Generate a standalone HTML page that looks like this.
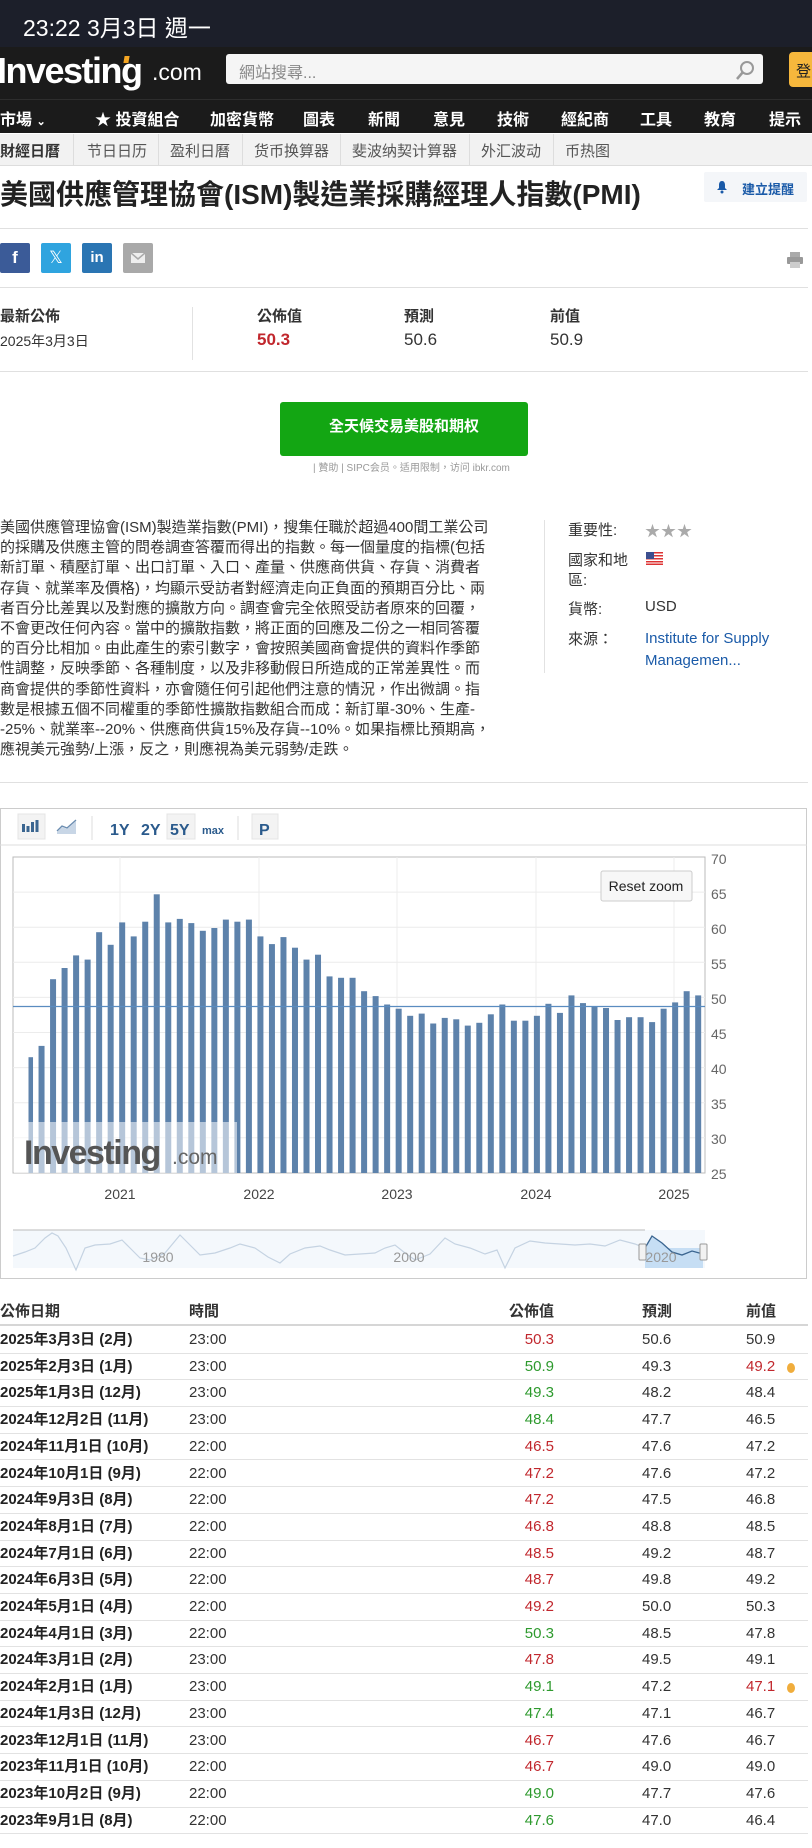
<!DOCTYPE html>
<html><head><meta charset="utf-8">
<style>
*{margin:0;padding:0;box-sizing:border-box}
body{width:812px;height:1848px;position:relative;background:#fff;font-family:"Liberation Sans","Noto Sans CJK TC",sans-serif;color:#333;overflow:hidden}
.a{position:absolute;white-space:nowrap}
#sb{left:0;top:0;width:812px;height:47px;background:#1c1f2a}
#hd{left:0;top:47px;width:812px;height:52px;background:#1b1b1b}
#nav{left:0;top:99px;width:812px;height:34px;background:#1b1b1b;border-top:1px solid #2d2d2d}
#nav span{position:absolute;top:6px;color:#fff;font-size:16px;font-weight:bold}
#sub{left:0;top:134px;width:812px;height:32px;background:#f2f2f2;border-bottom:1px solid #ddd}
#sub span{position:absolute;top:6px;font-size:15px;color:#555}
.vl{position:absolute;top:0;width:1px;height:32px;background:#ddd}
.hr{position:absolute;left:0;width:808px;height:1px;background:#e0e0e0}
.soc{position:absolute;top:243px;width:30px;height:30px;border-radius:2px;color:#fff;font-weight:bold;text-align:center;line-height:30px;font-size:17px}
.desc{left:0;top:518px;font-size:15px;line-height:20.2px;color:#333}
.rl{position:absolute;font-size:15px;color:#333}
.tbl{position:absolute;left:0;width:808px;font-size:15px}
.row{position:absolute;left:0;width:808px;height:26.7px;border-bottom:1px solid #e2e2e2}
.row span{position:absolute;top:4px;line-height:18px;height:18px}
.d{left:0;font-weight:bold;color:#222}
.t{left:189px;color:#333}
.v{right:254px;text-align:right}
.f{left:642px;color:#333}
.p{left:746px;color:#333}
.r{color:#c1272d}.g{color:#2e9a2e}
.dot{position:absolute;left:787px;top:9px;width:8px;height:10px;border-radius:50%;background:#f0ad3c}
</style></head><body>
<div id="sb" class="a"><span class="a" style="left:23px;top:9px;color:#fff;font-size:23px">23:22 3月3日 週一</span></div>
<div id="hd" class="a">
 <span class="a" style="left:-3px;top:3px;color:#fff;font-size:36px;font-weight:bold;letter-spacing:-1.5px">Investing</span>
 <span class="a" style="left:152px;top:12px;color:#fff;font-size:23px">.com</span>
 <div class="a" style="left:124px;top:9px;width:5px;height:7px;background:#f5a623;transform:skewX(-10deg)"></div>
 <div class="a" style="left:226px;top:7px;width:537px;height:30px;background:#f5f5f5;border-radius:3px"><span class="a" style="left:13px;top:5px;font-size:16px;color:#888">網站搜尋...</span>
 <svg class="a" style="left:508px;top:5px" width="22" height="22" viewBox="0 0 22 22"><circle cx="13" cy="9" r="6" fill="none" stroke="#999" stroke-width="2"/><line x1="9" y1="13" x2="3" y2="20" stroke="#999" stroke-width="2.5"/></svg></div>
 <div class="a" style="left:789px;top:5px;width:30px;height:35px;background:#f6b73c;border-radius:4px"><span class="a" style="left:7px;top:8px;font-size:15px;color:#222">登</span></div>
</div>
<div id="nav" class="a">
 <span style="left:0">市場 <small style="font-size:11px">⌄</small></span>
 <span style="left:95px">★ 投資組合</span><span style="left:210px">加密貨幣</span><span style="left:303px">圖表</span><span style="left:368px">新聞</span><span style="left:433px">意見</span><span style="left:497px">技術</span><span style="left:561px">經紀商</span><span style="left:640px">工具</span><span style="left:704px">教育</span><span style="left:769px">提示</span>
</div>
<div id="sub" class="a">
 <span style="left:0;font-weight:bold;color:#333">財經日曆</span><div class="vl" style="left:73px"></div>
 <span style="left:87px">节日日历</span><div class="vl" style="left:158px"></div>
 <span style="left:170px">盈利日曆</span><div class="vl" style="left:242px"></div>
 <span style="left:254px">货币换算器</span><div class="vl" style="left:340px"></div>
 <span style="left:352px">斐波纳契计算器</span><div class="vl" style="left:469px"></div>
 <span style="left:481px">外汇波动</span><div class="vl" style="left:553px"></div>
 <span style="left:565px">币热图</span>
</div>
<div class="a" style="left:0;top:173px;font-size:28px;font-weight:bold;color:#222;letter-spacing:0">美國供應管理協會(ISM)製造業採購經理人指數(PMI)</div>
<div class="a" style="left:704px;top:172px;width:103px;height:30px;background:#f4f6f9;border-radius:2px">
 <svg class="a" style="left:12px;top:8px" width="12" height="14" viewBox="0 0 12 14"><path d="M6 1C3.5 1 3 3.5 3 5v3L1 10h10L9 8V5C9 3.5 8.5 1 6 1z" fill="#1a5aa8"/><circle cx="6" cy="12" r="1.5" fill="#1a5aa8"/></svg>
 <span class="a" style="left:38px;top:7px;font-size:13px;color:#1a5aa8;font-weight:bold">建立提醒</span></div>
<div class="hr" style="top:228px"></div>
<div class="soc" style="left:0;background:#3b5b98">f</div>
<div class="soc" style="left:41px;background:#2fa4df;font-weight:normal">𝕏</div>
<div class="soc" style="left:82px;background:#2a75b3;font-size:15px">in</div>
<div class="soc" style="left:123px;background:#a9a9a9"><svg width="30" height="30" viewBox="0 0 30 30"><rect x="8" y="10" width="14" height="10" fill="#eee"/><path d="M8 10l7 6 7-6" fill="none" stroke="#a9a9a9" stroke-width="1.5"/></svg></div>
<svg class="a" style="left:786px;top:251px" width="18" height="18" viewBox="0 0 18 18"><rect x="4" y="1" width="10" height="5" fill="#aaa"/><rect x="1" y="6" width="16" height="7" rx="1" fill="#999"/><rect x="4" y="11" width="10" height="6" fill="#ccc"/></svg>
<div class="hr" style="top:287px"></div>
<span class="a" style="left:0;top:305px;font-size:15px;font-weight:bold;color:#333">最新公佈</span>
<span class="a" style="left:0;top:331px;font-size:14px;color:#333">2025年3月3日</span>
<div class="a" style="left:192px;top:307px;width:1px;height:53px;background:#e2e2e2"></div>
<span class="a" style="left:257px;top:305px;font-size:15px;font-weight:bold;color:#333">公佈值</span>
<span class="a" style="left:257px;top:330px;font-size:17px;font-weight:bold;color:#c1272d">50.3</span>
<span class="a" style="left:404px;top:305px;font-size:15px;font-weight:bold;color:#333">預測</span>
<span class="a" style="left:404px;top:330px;font-size:17px;color:#333">50.6</span>
<span class="a" style="left:550px;top:305px;font-size:15px;font-weight:bold;color:#333">前值</span>
<span class="a" style="left:550px;top:330px;font-size:17px;color:#333">50.9</span>
<div class="hr" style="top:371px"></div>
<div class="a" style="left:280px;top:402px;width:248px;height:54px;background:#13a613;border-radius:3px;color:#fff;font-weight:bold;font-size:15px;text-align:center;line-height:50px">全天候交易美股和期权</div>
<span class="a" style="left:313px;top:459px;font-size:10px;color:#999">| 贊助 | SIPC会员。适用限制，访问 ibkr.com</span>
<div class="a desc">美國供應管理協會(ISM)製造業指數(PMI)，搜集任職於超過400間工業公司<br>的採購及供應主管的問卷調查答覆而得出的指數。每一個量度的指標(包括<br>新訂單、積壓訂單、出口訂單、入口、產量、供應商供貨、存貨、消費者<br>存貨、就業率及價格)，均顯示受訪者對經濟走向正負面的預期百分比、兩<br>者百分比差異以及對應的擴散方向。調查會完全依照受訪者原來的回覆，<br>不會更改任何內容。當中的擴散指數，將正面的回應及二份之一相同答覆<br>的百分比相加。由此產生的索引數字，會按照美國商會提供的資料作季節<br>性調整，反映季節、各種制度，以及非移動假日所造成的正常差異性。而<br>商會提供的季節性資料，亦會隨任何引起他們注意的情況，作出微調。指<br>數是根據五個不同權重的季節性擴散指數組合而成：新訂單-30%、生產-<br>-25%、就業率--20%、供應商供貨15%及存貨--10%。如果指標比預期高，<br>應視美元強勢/上漲，反之，則應視為美元弱勢/走跌。</div>
<div class="a" style="left:544px;top:520px;width:1px;height:153px;background:#e2e2e2"></div>
<span class="rl" style="left:568px;top:519px">重要性:</span>
<span class="rl" style="left:645px;top:520px;color:#aaa;font-size:15px;letter-spacing:1px">★★★</span>
<span class="rl" style="left:568px;top:549px">國家和地</span><span class="rl" style="left:568px;top:569px">區:</span>
<svg class="a" style="left:646px;top:552px" width="17" height="13" viewBox="0 0 17 13"><rect width="17" height="13" fill="#fff"/><g fill="#d33"><rect y="0" width="17" height="1.5"/><rect y="3" width="17" height="1.5"/><rect y="6" width="17" height="1.5"/><rect y="9" width="17" height="1.5"/><rect y="11.5" width="17" height="1.5"/></g><rect width="8" height="7" fill="#3c4f8f"/></svg>
<span class="rl" style="left:568px;top:598px">貨幣:</span><span class="rl" style="left:645px;top:598px">USD</span>
<span class="rl" style="left:568px;top:628px">來源：</span>
<span class="rl" style="left:645px;top:628px;color:#1a5aa8;line-height:22px">Institute for Supply<br>Managemen...</span>
<div class="hr" style="top:782px"></div>

<svg class="a" style="left:0;top:808px" width="812" height="472" viewBox="0 0 812 472" font-family="Liberation Sans, sans-serif">
 <defs><clipPath id="pc"><rect x="13" y="49" width="692" height="316"/></clipPath></defs>
 <rect x="0.5" y="0.5" width="806" height="470" fill="#fff" stroke="#ccc"/>
 <line x1="0" y1="37" x2="807" y2="37" stroke="#ddd"/>
 <rect x="18" y="6" width="27" height="25" fill="#f3f3f3" stroke="#e5e5e5"/>
 <g fill="#3a6590"><rect x="22" y="16" width="3" height="8"/><rect x="26.5" y="18" width="3" height="6"/><rect x="31" y="14" width="3" height="10"/><rect x="35.5" y="12" width="3" height="12"/></g>
 <path d="M57 24 L62 19 L67 21 L76 13 L76 26 L57 26Z" fill="#c8d6e6"/><path d="M57 23 L62 18 L67 20 L76 12" fill="none" stroke="#6a8cb0" stroke-width="1.3"/>
 <line x1="92" y1="8" x2="92" y2="32" stroke="#ddd"/>
 <text x="110" y="27" font-size="16" font-weight="bold" fill="#2a5a8c">1Y</text>
 <text x="141" y="27" font-size="16" font-weight="bold" fill="#2a5a8c">2Y</text>
 <rect x="167" y="6" width="28" height="25" fill="#f3f3f3" stroke="#e5e5e5"/>
 <text x="170" y="27" font-size="16" font-weight="bold" fill="#2a5a8c">5Y</text>
 <text x="202" y="26" font-size="11" font-weight="bold" fill="#2a5a8c">max</text>
 <line x1="238" y1="8" x2="238" y2="32" stroke="#ddd"/>
 <rect x="252" y="6" width="26" height="25" fill="#f3f3f3" stroke="#e5e5e5"/>
 <text x="259" y="27" font-size="16" font-weight="bold" fill="#2a5a8c">P</text>
 <rect x="13" y="49" width="692" height="316" fill="#fff" stroke="#bbb"/>
 <g stroke="#ececec"><line x1="13" x2="705" y1="84.1" y2="84.1"/><line x1="13" x2="705" y1="119.2" y2="119.2"/><line x1="13" x2="705" y1="154.3" y2="154.3"/><line x1="13" x2="705" y1="189.4" y2="189.4"/><line x1="13" x2="705" y1="224.5" y2="224.5"/><line x1="13" x2="705" y1="259.6" y2="259.6"/><line x1="13" x2="705" y1="294.7" y2="294.7"/><line x1="13" x2="705" y1="329.8" y2="329.8"/>
 <line x1="120" x2="120" y1="49" y2="365"/><line x1="259" x2="259" y1="49" y2="365"/><line x1="397" x2="397" y1="49" y2="365"/><line x1="536" x2="536" y1="49" y2="365"/><line x1="674" x2="674" y1="49" y2="365"/></g>
 <g fill="#5d82ab" clip-path="url(#pc)" transform="translate(15.5,0)">
 <rect x="0" y="195.8" width="6" height="300"/><rect x="11.52" y="249.2" width="6" height="300"/><rect x="23.04" y="237.9" width="6" height="300"/><rect x="34.56" y="171.2" width="6" height="300"/><rect x="46.08" y="160" width="6" height="300"/><rect x="57.6" y="147.4" width="6" height="300"/><rect x="69.12" y="151.6" width="6" height="300"/><rect x="80.64" y="124.2" width="6" height="300"/><rect x="92.16" y="136.8" width="6" height="300"/><rect x="103.68" y="114.4" width="6" height="300"/>
 <rect x="115.2" y="128.4" width="6" height="300"/><rect x="126.72" y="113.7" width="6" height="300"/><rect x="138.24" y="86.3" width="6" height="300"/><rect x="149.76" y="114.4" width="6" height="300"/><rect x="161.28" y="110.9" width="6" height="300"/><rect x="172.8" y="115.1" width="6" height="300"/><rect x="184.32" y="122.8" width="6" height="300"/><rect x="195.84" y="120" width="6" height="300"/><rect x="207.36" y="111.6" width="6" height="300"/><rect x="218.88" y="113.7" width="6" height="300"/>
 <rect x="230.4" y="111.6" width="6" height="300"/><rect x="241.92" y="128.4" width="6" height="300"/><rect x="253.44" y="136.1" width="6" height="300"/><rect x="264.96" y="129.1" width="6" height="300"/><rect x="276.48" y="139.7" width="6" height="300"/><rect x="288" y="151.6" width="6" height="300"/><rect x="299.52" y="146.7" width="6" height="300"/><rect x="311.04" y="168.4" width="6" height="300"/><rect x="322.56" y="169.8" width="6" height="300"/><rect x="334.08" y="169.8" width="6" height="300"/>
 <rect x="345.6" y="183.2" width="6" height="300"/><rect x="357.12" y="188.1" width="6" height="300"/><rect x="368.64" y="196.5" width="6" height="300"/><rect x="380.16" y="200.7" width="6" height="300"/><rect x="391.68" y="207.8" width="6" height="300"/><rect x="403.2" y="205.6" width="6" height="300"/><rect x="414.72" y="215.5" width="6" height="300"/><rect x="426.24" y="209.9" width="6" height="300"/><rect x="437.76" y="211.3" width="6" height="300"/><rect x="449.28" y="217.6" width="6" height="300"/>
 <rect x="460.8" y="214.8" width="6" height="300"/><rect x="472.32" y="206.3" width="6" height="300"/><rect x="483.84" y="196.5" width="6" height="300"/><rect x="495.36" y="212.7" width="6" height="300"/><rect x="506.88" y="212.7" width="6" height="300"/><rect x="518.4" y="207.8" width="6" height="300"/><rect x="529.92" y="195.8" width="6" height="300"/><rect x="541.44" y="204.9" width="6" height="300"/><rect x="552.96" y="187.4" width="6" height="300"/><rect x="564.48" y="195.1" width="6" height="300"/>
 <rect x="576" y="198.6" width="6" height="300"/><rect x="587.52" y="200" width="6" height="300"/><rect x="599.04" y="212" width="6" height="300"/><rect x="610.56" y="209.2" width="6" height="300"/><rect x="622.08" y="209.2" width="6" height="300"/><rect x="633.6" y="214.1" width="6" height="300"/><rect x="645.12" y="200.7" width="6" height="300"/><rect x="656.64" y="194.4" width="6" height="300"/><rect x="668.16" y="183.2" width="6" height="300"/><rect x="679.68" y="187.4" width="6" height="300"/>
 </g>
 <line x1="13" x2="705" y1="198.5" y2="198.5" stroke="#5a8cc0" stroke-width="1.2"/>
 <rect x="14" y="314" width="223" height="51" fill="#fff" fill-opacity="0.55"/>
 <text x="24" y="356" font-size="34" font-weight="bold" fill="#555" letter-spacing="-1.5">Investing</text>
 <text x="172" y="356" font-size="21" fill="#666">.com</text>
 <rect x="601" y="63" width="91" height="30" rx="2" fill="#f7f7f7" stroke="#ccc"/>
 <text x="646" y="83" font-size="14" fill="#222" text-anchor="middle">Reset zoom</text>
 <g font-size="14" fill="#666"><text x="711" y="56">70</text><text x="711" y="91">65</text><text x="711" y="126">60</text><text x="711" y="161">55</text><text x="711" y="196">50</text><text x="711" y="231">45</text><text x="711" y="266">40</text><text x="711" y="301">35</text><text x="711" y="336">30</text><text x="711" y="371">25</text></g>
 <g font-size="14" fill="#444" text-anchor="middle"><text x="120" y="391">2021</text><text x="259" y="391">2022</text><text x="397" y="391">2023</text><text x="536" y="391">2024</text><text x="674" y="391">2025</text></g>
 <rect x="13" y="422" width="692" height="38" fill="#f4f8fc"/>
 <line x1="13" x2="645" y1="422" y2="422" stroke="#bbb"/>
 <path d="M13 448 L25 444 L35 440 L45 430 L52 425 L58 428 L66 440 L76 462 L85 440 L95 437 L110 436 L122 432 L130 440 L140 450 L150 452 L165 445 L180 427 L190 437 L200 447 L215 445 L230 440 L240 436 L255 440 L268 449 L280 455 L290 446 L305 440 L320 438 L330 442 L345 447 L360 446 L375 445 L385 440 L395 437 L405 445 L415 452 L430 446 L445 430 L455 436 L470 440 L485 446 L497 442 L505 460 L515 440 L530 433 L545 435 L560 436 L575 437 L590 436 L605 438 L620 432 L635 436 L645 440" fill="none" stroke="#c5d3e2" stroke-width="1.2"/>
 <rect x="645" y="440" width="58" height="20" fill="#c6def4"/>
 <path d="M645 440 L652 428 L662 435 L672 444 L682 447 L692 443 L703 446" fill="#c6def4" stroke="#3a6590" stroke-width="1.3"/>
 <rect x="639" y="436" width="7" height="16" rx="1" fill="#f2f2f2" stroke="#999"/><rect x="700" y="436" width="7" height="16" rx="1" fill="#f2f2f2" stroke="#999"/>
 <g font-size="14" fill="#999" text-anchor="middle"><text x="158" y="454">1980</text><text x="409" y="454">2000</text><text x="661" y="454">2020</text></g>
</svg>

<div class="tbl" style="top:1296px;height:30px;border-bottom:2px solid #d6d6d6;font-weight:bold;color:#333">
 <span class="a" style="left:0;top:4px">公佈日期</span><span class="a" style="left:189px;top:4px">時間</span><span class="a" style="right:254px;top:4px">公佈值</span><span class="a" style="left:642px;top:4px">預測</span><span class="a" style="left:746px;top:4px">前值</span>
</div>
<div class="tbl" style="top:1327px">
<div class="row" style="top:0"><span class="d">2025年3月3日 (2月)</span><span class="t">23:00</span><span class="v r">50.3</span><span class="f">50.6</span><span class="p">50.9</span></div>
<div class="row" style="top:26.7px"><span class="d">2025年2月3日 (1月)</span><span class="t">23:00</span><span class="v g">50.9</span><span class="f">49.3</span><span class="p r">49.2</span><div class="dot"></div></div>
<div class="row" style="top:53.4px"><span class="d">2025年1月3日 (12月)</span><span class="t">23:00</span><span class="v g">49.3</span><span class="f">48.2</span><span class="p">48.4</span></div>
<div class="row" style="top:80.1px"><span class="d">2024年12月2日 (11月)</span><span class="t">23:00</span><span class="v g">48.4</span><span class="f">47.7</span><span class="p">46.5</span></div>
<div class="row" style="top:106.8px"><span class="d">2024年11月1日 (10月)</span><span class="t">22:00</span><span class="v r">46.5</span><span class="f">47.6</span><span class="p">47.2</span></div>
<div class="row" style="top:133.5px"><span class="d">2024年10月1日 (9月)</span><span class="t">22:00</span><span class="v r">47.2</span><span class="f">47.6</span><span class="p">47.2</span></div>
<div class="row" style="top:160.2px"><span class="d">2024年9月3日 (8月)</span><span class="t">22:00</span><span class="v r">47.2</span><span class="f">47.5</span><span class="p">46.8</span></div>
<div class="row" style="top:186.9px"><span class="d">2024年8月1日 (7月)</span><span class="t">22:00</span><span class="v r">46.8</span><span class="f">48.8</span><span class="p">48.5</span></div>
<div class="row" style="top:213.6px"><span class="d">2024年7月1日 (6月)</span><span class="t">22:00</span><span class="v r">48.5</span><span class="f">49.2</span><span class="p">48.7</span></div>
<div class="row" style="top:240.3px"><span class="d">2024年6月3日 (5月)</span><span class="t">22:00</span><span class="v r">48.7</span><span class="f">49.8</span><span class="p">49.2</span></div>
<div class="row" style="top:267px"><span class="d">2024年5月1日 (4月)</span><span class="t">22:00</span><span class="v r">49.2</span><span class="f">50.0</span><span class="p">50.3</span></div>
<div class="row" style="top:293.7px"><span class="d">2024年4月1日 (3月)</span><span class="t">22:00</span><span class="v g">50.3</span><span class="f">48.5</span><span class="p">47.8</span></div>
<div class="row" style="top:320.4px"><span class="d">2024年3月1日 (2月)</span><span class="t">23:00</span><span class="v r">47.8</span><span class="f">49.5</span><span class="p">49.1</span></div>
<div class="row" style="top:347.1px"><span class="d">2024年2月1日 (1月)</span><span class="t">23:00</span><span class="v g">49.1</span><span class="f">47.2</span><span class="p r">47.1</span><div class="dot"></div></div>
<div class="row" style="top:373.8px"><span class="d">2024年1月3日 (12月)</span><span class="t">23:00</span><span class="v g">47.4</span><span class="f">47.1</span><span class="p">46.7</span></div>
<div class="row" style="top:400.5px"><span class="d">2023年12月1日 (11月)</span><span class="t">23:00</span><span class="v r">46.7</span><span class="f">47.6</span><span class="p">46.7</span></div>
<div class="row" style="top:427.2px"><span class="d">2023年11月1日 (10月)</span><span class="t">22:00</span><span class="v r">46.7</span><span class="f">49.0</span><span class="p">49.0</span></div>
<div class="row" style="top:453.9px"><span class="d">2023年10月2日 (9月)</span><span class="t">22:00</span><span class="v g">49.0</span><span class="f">47.7</span><span class="p">47.6</span></div>
<div class="row" style="top:480.6px"><span class="d">2023年9月1日 (8月)</span><span class="t">22:00</span><span class="v g">47.6</span><span class="f">47.0</span><span class="p">46.4</span></div>
</div>
</body></html>
